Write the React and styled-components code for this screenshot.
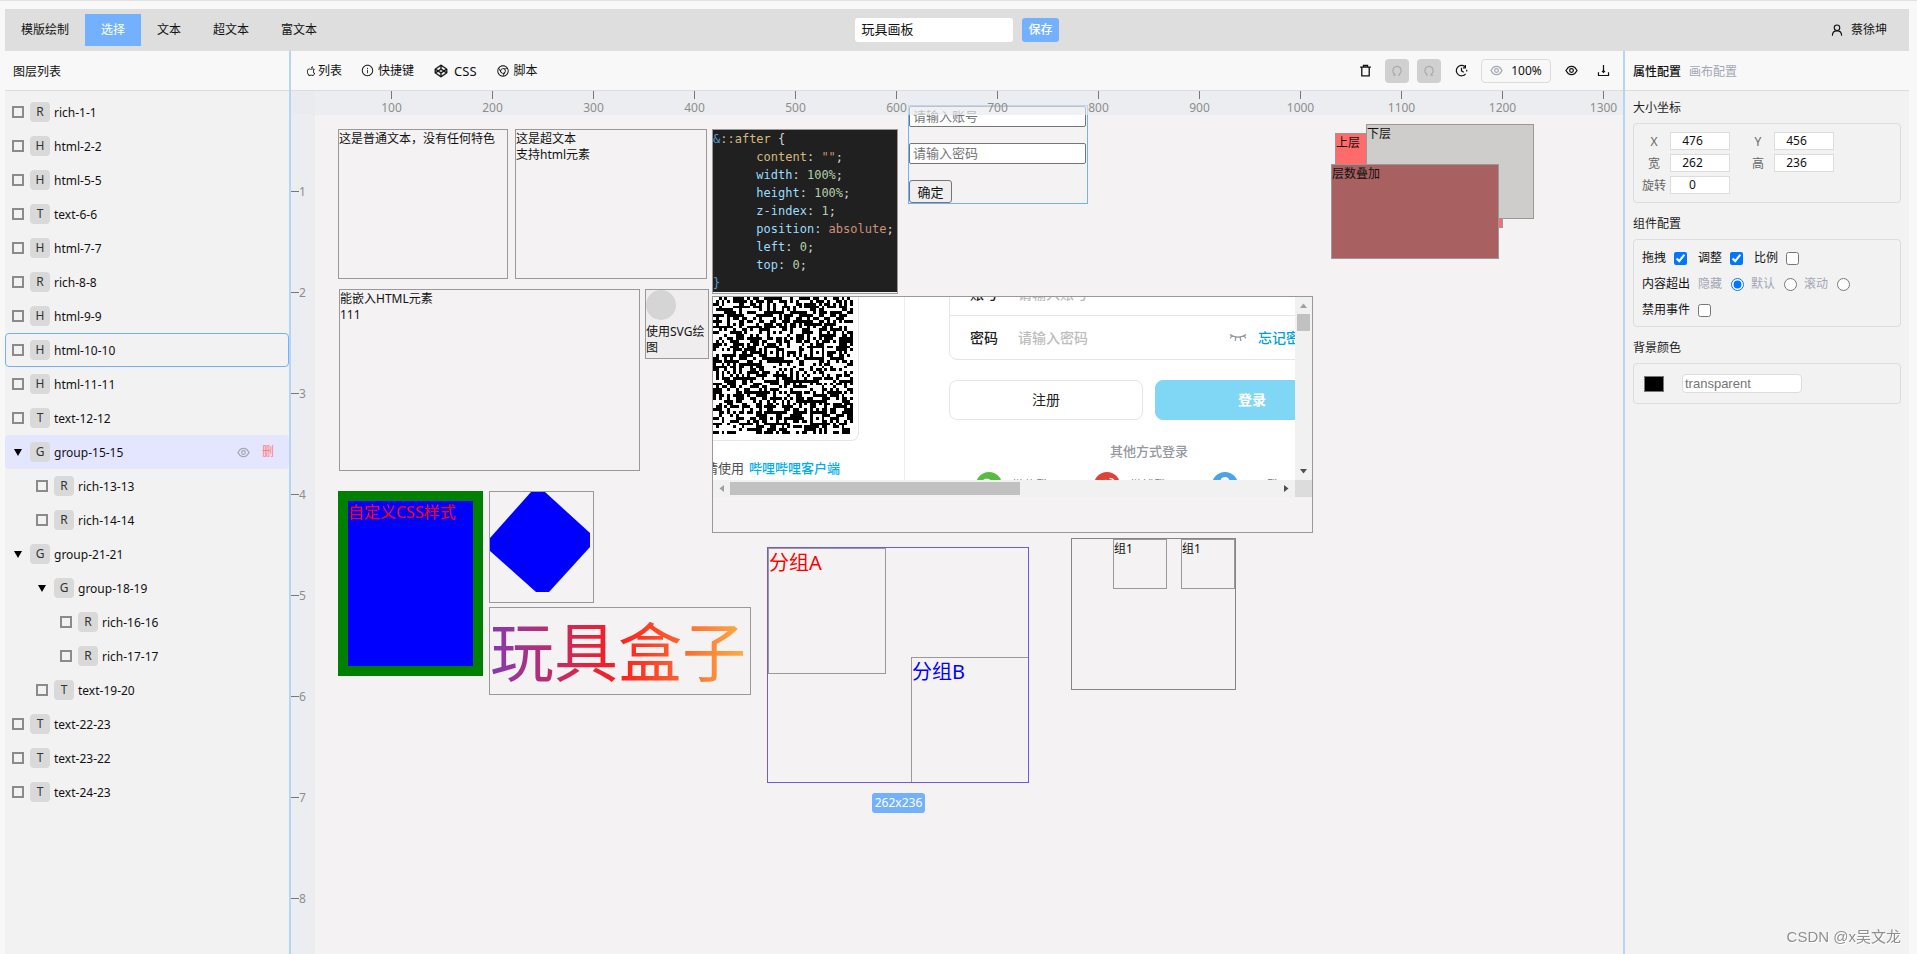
import React from "react";
import styled, { createGlobalStyle, css } from "styled-components";
import {
  AiOutlineApple,
  AiOutlineInfoCircle,
  AiOutlineCodepen,
  AiOutlineChrome,
} from "react-icons/ai";
import { FaWeixin, FaWeibo, FaQq } from "react-icons/fa";

const sans = `"Noto Sans", "Noto Sans CJK SC", sans-serif`;
const cjk = `"Noto Sans CJK SC", sans-serif`;

const GlobalStyle = createGlobalStyle`
  *, *::before, *::after { box-sizing: border-box; }
  body {
    margin: 0;
    background: #f8f8f8;
    color: #111;
    font: 12px/16px ${sans};
  }
  button, input { font: inherit; color: inherit; margin: 0; }
  button { padding: 0; border: 0; background: none; cursor: pointer; white-space: nowrap; }
  a { text-decoration: none; }
  svg { display: block; flex: none; }
`;

/* ---------- page frame ---------- */

const Page = styled.div`
  min-height: 100vh;
  display: flex;
  flex-direction: column;
  border-top: 1px solid #e2e2e2;
  padding: 8px 8px 0 5px;
`;

const Header = styled.header`
  height: 42px;
  display: grid;
  grid-template-columns: 1fr auto 1fr;
  align-items: center;
  background: #dedede;
`;

const Nav = styled.nav`
  display: flex;
`;

const NavButton = styled.button`
  height: 32px;
  padding: 0 16px;
  ${(p) => p.$active && css`background: #73b1ff; color: #fff;`}
`;

const TitleForm = styled.form`
  display: flex;
  gap: 9px;
`;

const TitleInput = styled.input`
  width: 158px;
  height: 24px;
  padding: 0 6px 4px;
  border: 0;
  border-radius: 3px;
  background: #fff;
  font-size: 13px;
`;

const SaveButton = styled.button`
  height: 24px;
  padding: 0 6px;
  border-radius: 3px;
  background: #73b1ff;
  color: #fff;
  font-weight: 500;
`;

const User = styled.div`
  display: flex;
  align-items: center;
  justify-content: flex-end;
  gap: 8px;
  padding-right: 22px;
`;

const Main = styled.main`
  flex: 1;
  display: flex;
`;

const SidePanel = styled.aside`
  flex: none;
  width: 284px;
  background: #f2f2f2;
`;

const Divider = styled.div`
  flex: none;
  width: 2px;
  background: #b5d4fb;
`;

const Center = styled.section`
  flex: 1;
  min-width: 0;
  display: flex;
  flex-direction: column;
`;

const PanelHeader = styled.div`
  height: 40px;
  display: flex;
  align-items: center;
  gap: 8px;
  padding: 2px 8px 0;
  border-bottom: 1px solid #dcdcdc;
  background: #f8f8f8;
`;

const PanelTab = styled.button`
  color: ${(p) => (p.$active ? "#111" : "#a3a6b4")};
  font-weight: ${(p) => (p.$active ? 500 : 400)};
`;

/* ---------- layer list ---------- */

const LayerList = styled.ul`
  margin: 0;
  padding: 4px 0;
  list-style: none;
`;

const LayerRow = styled.li`
  height: 34px;
  display: flex;
  align-items: center;
  padding: 0 14px 0 ${(p) => 6 + p.$depth * 24}px;
  border: 1px solid ${(p) => (p.$focused ? "#73b1ff" : "transparent")};
  border-radius: 4px;
  background: ${(p) => (p.$selected ? "#e4e6ff" : "transparent")};
`;

const LayerCheck = styled.input`
  appearance: none;
  width: 12px;
  height: 12px;
  border: 2px solid #8b8b8b;
  outline: 0;
`;

const Collapse = styled.button`
  width: 12px;
  height: 12px;
  display: grid;
  place-items: center;
`;

const LayerLabel = styled.label`
  flex: 1;
  display: flex;
  align-items: center;
  gap: 4px;
  margin-left: 6px;
  line-height: 20px;
`;

const LayerName = styled.span`
  padding-top: 2px;
`;

const TypeBadge = styled.span`
  width: 20px;
  height: 20px;
  border-radius: 4px;
  background: #d9d9d9;
  color: #333;
  line-height: 20px;
  text-align: center;
`;

const RowAction = styled.button`
  margin-left: 12px;
  color: ${(p) => (p.$danger ? "#ff7777" : "#a3a6b4")};
`;

/* ---------- toolbar ---------- */

const Toolbar = styled.div`
  height: 40px;
  display: flex;
  align-items: center;
  justify-content: space-between;
  padding: 0 8px 0 14px;
  border-bottom: 1px solid #dcdcdc;
  background: #f8f8f8;
`;

const ToolGroup = styled.div`
  display: flex;
  align-items: center;
  gap: ${(p) => p.$gap}px;
`;

const TextTool = styled.button`
  display: flex;
  align-items: center;
  gap: ${(p) => p.$gap || 4}px;
  font-size: ${(p) => (p.$latin ? 13 : 12)}px;
`;

const IconTool = styled.button`
  width: 24px;
  height: 24px;
  display: grid;
  place-items: center;
  border-radius: 4px;
  &:disabled { background: #d0d0d0; color: #a8a8a8; }
`;

const ZoomBox = styled.button`
  width: 70px;
  height: 24px;
  display: flex;
  align-items: center;
  justify-content: center;
  gap: 8px;
  border: 1px solid #dcdcdc;
  border-radius: 4px;
  svg { color: #a3a6b4; }
`;

/* ---------- canvas ---------- */

const Workspace = styled.div`
  position: relative;
  flex: 1;
  min-height: 740px;
  overflow: hidden;
  background: #f4f2f3;
`;

const Ruler = styled.div`
  position: absolute;
  top: 0;
  left: 0;
  display: flex;
  overflow: hidden;
  background: rgba(232, 234, 238, 0.65);
  color: #8d8d8d;
  line-height: 18px;
  ${(p) =>
    p.$vertical
      ? css`bottom: 0; width: 24px; flex-direction: column; padding-top: 50px;`
      : css`right: 0; height: 24px; padding-left: 50px;`}
`;

const RulerCell = styled.div`
  flex: none;
  display: flex;
  align-items: center;
  ${(p) => (p.$vertical ? css`height: 101px;` : css`width: 101px; flex-direction: column;`)}
`;

const Tick = styled.span`
  flex: none;
  background: #777;
  ${(p) => (p.$vertical ? css`width: 8px; height: 1px;` : css`width: 1px; height: 8px;`)}
`;

const Node = styled.div`
  position: absolute;
  left: ${(p) => p.$x}px;
  top: ${(p) => p.$y}px;
  width: ${(p) => p.$w}px;
  height: ${(p) => p.$h}px;
  overflow: hidden;
  border: 1px solid ${(p) => p.$line || "#999"};
  background: ${(p) => p.$fill || "transparent"};
  color: ${(p) => p.$color || "#111"};
`;

const TextNode = styled(Node)`
  padding-top: 1px;
`;

const StyledBox = styled(Node)`
  border: 10px solid green;
  background: blue;
  color: red;
  font-size: 16px;
  line-height: 22px;
`;

const GroupText = styled.div`
  font-size: 20px;
  line-height: 28px;
`;

const GradientText = styled.div`
  font-size: 64px;
  line-height: 80px;
  white-space: nowrap;
  font-family: ${cjk};
  width: 256px;
  background: linear-gradient(90deg, #833ab4, #fd1d1d 50%, #fcb045);
  background-clip: text;
  color: transparent;
`;

const Code = styled.pre`
  margin: 0;
  background: #202020;
  color: #d4d4d4;
  font: 12px/18px "DejaVu Sans Mono", monospace;
`;

const Tok = styled.span`
  color: ${(p) => ({ amp: "#569cd6", sel: "#d7ba7d", prop: "#9cdcfe", num: "#b5cea8", str: "#ce9178" }[p.$k])};
`;

const LoginForm = styled.form`
  display: flex;
  flex-direction: column;
  align-items: flex-start;
  gap: 16px;
`;

const LoginInput = styled.input`
  width: 177px;
  height: 21px;
  padding: 0 3px 2px;
  border: 1px solid #767676;
  border-radius: 2px;
  background: #fff;
  font-size: 13px;
  &::placeholder { color: #757575; }
`;

const LoginButton = styled.button`
  width: 43px;
  height: 23px;
  border: 1px solid #767676;
  border-radius: 3px;
  background: #efefef;
  font-size: 13px;
`;

const SizeTag = styled.div`
  position: absolute;
  left: ${(p) => p.$x}px;
  top: ${(p) => p.$y}px;
  width: 53px;
  border-radius: 3px;
  background: #73b1ff;
  color: #fff;
  line-height: 20px;
  text-align: center;
`;

/* ---------- embedded page ---------- */

const Frame = styled.div`
  display: grid;
  grid-template-columns: 1fr 17px;
  grid-template-rows: 183px 17px;
`;

const FrameView = styled.div`
  display: flex;
  overflow: hidden;
  background: #fff;
`;

const ScrollTrack = styled.div`
  display: flex;
  flex-direction: ${(p) => (p.$vertical ? "column" : "row")};
  align-items: center;
  justify-content: space-between;
  padding: ${(p) => (p.$vertical ? "6px 0" : "0 5px")};
  background: #f1f1f1;
  color: #505050;
`;

const ScrollThumb = styled.div`
  background: #c1c1c1;
  ${(p) =>
    p.$vertical
      ? css`width: 13px; height: 17px; margin: 6px 0 auto;`
      : css`height: 13px; width: 290px; margin: 0 auto 0 5px;`}
`;

const ScrollCorner = styled.div`
  background: #dcdcdc;
`;

const QrPane = styled.div`
  flex: none;
  width: 192px;
  border-right: 1px solid #eee;
`;

const QrCard = styled.div`
  width: 146px;
  height: 144px;
  border: 1px solid #e3e5e7;
  border-width: 0 1px 1px 0;
  border-bottom-right-radius: 8px;
`;

const QrHint = styled.p`
  margin: 17px 0 0 -8px;
  font-size: 13px;
  line-height: 20px;
  color: #505050;
  white-space: nowrap;
  a { margin-left: 5px; color: #00aeec; font-weight: 500; }
`;

const Portal = styled.form`
  flex: none;
  width: 400px;
  margin: -26px 0 0 44px;
  font-size: 14px;
  line-height: 20px;
`;

const Credentials = styled.div`
  border: 1px solid #e3e5e7;
  border-radius: 8px;
`;

const CredentialRow = styled.div`
  height: 43px;
  display: flex;
  align-items: center;
  padding-left: 20px;
  color: #212121;
  font-weight: 500;
  &:first-child { height: 44px; border-bottom: 1px solid #e3e5e7; }
  label { width: 48px; }
  input { width: 211px; padding: 0; border: 0; background: none; }
  input::placeholder { color: #bdbdbd; }
  a { margin-left: 11px; color: #00a1d6; white-space: nowrap; }
`;

const PortalButtons = styled.div`
  display: flex;
  gap: 12px;
  margin-top: 20px;
`;

const PortalButton = styled.button`
  flex: 1;
  height: 40px;
  border: 1px solid ${(p) => (p.$primary ? "#7fd6f5" : "#e3e5e7")};
  border-radius: 8px;
  background: ${(p) => (p.$primary ? "#7fd6f5" : "#fff")};
  color: ${(p) => (p.$primary ? "#fff" : "#212121")};
  font-weight: ${(p) => (p.$primary ? 700 : 400)};
`;

const OtherTitle = styled.div`
  margin-top: 21px;
  font-size: 13px;
  color: #9499a0;
  font-weight: 500;
  text-align: center;
`;

const Socials = styled.div`
  display: flex;
  margin: 11px 0 0 27px;
`;

const SocialLink = styled.a`
  flex: none;
  width: 118px;
  display: flex;
  align-items: center;
  gap: 10px;
  font-size: 12px;
  color: #707070;
`;

const SocialDot = styled.span`
  width: 26px;
  height: 26px;
  display: grid;
  place-items: center;
  border-radius: 50%;
  background: ${(p) => p.$fill};
  color: #fff;
`;

const SocialName = styled.span`
  padding-top: 2px;
`;

/* ---------- property panel ---------- */

const Properties = styled.div`
  display: flex;
  flex-direction: column;
  padding: 8px;
`;

const SectionTitle = styled.h2`
  margin: 0 0 6px;
  font: inherit;
  line-height: 18px;
  color: #222;
`;

const Box = styled.div`
  display: ${(p) => (p.$row ? "flex" : "block")};
  gap: 18px;
  padding: ${(p) => p.$pad};
  margin-bottom: 12px;
  border: 1px solid #dcdcdc;
  border-radius: 4px;
`;

const CoordGrid = styled.div`
  display: grid;
  grid-template-columns: 88px 88px;
  gap: 4px 16px;
`;

const Coord = styled.label`
  height: 18px;
  display: grid;
  grid-template-columns: 24px 60px;
  gap: 4px;
  color: #666;
  line-height: 20px;
  text-align: center;
  white-space: nowrap;
`;

const NumberInput = styled.input`
  width: 60px;
  height: 18px;
  padding: 0;
  border: 1px solid #dcdcdc;
  background: #fff;
  color: #111;
  text-align: center;
`;

const OptionRow = styled.div`
  height: 26px;
  display: flex;
  align-items: center;
`;

const Option = styled.label`
  display: flex;
  align-items: center;
  gap: ${(p) => (p.$radio ? 9 : 8)}px;
  margin-right: ${(p) => (p.$radio ? 7 : 11)}px;
  color: ${(p) => (p.$radio ? "#a3a6b4" : "#111")};
  input { width: 13px; height: 13px; }
`;

const RowLabel = styled.span`
  margin-right: 8px;
`;

const ColorInput = styled.input`
  appearance: none;
  width: 20px;
  height: 16px;
  margin-top: 2px;
  padding: 0;
  border: 0;
  background: none;
  &::-webkit-color-swatch-wrapper { padding: 0; }
  &::-webkit-color-swatch { border: 1px solid #777; border-radius: 0; }
`;

const ColorText = styled.input`
  width: 120px;
  height: 19px;
  padding: 0 2px;
  border: 1px solid #dcdcdc;
  border-radius: 4px;
  background: #fff;
  font: 13px "Liberation Sans", sans-serif;
  &::placeholder { color: #757575; }
`;

const Watermark = styled.div`
  position: fixed;
  right: 16px;
  bottom: 7px;
  color: #8f8f8f;
  font: 15px/20px "Liberation Sans", "Noto Sans CJK SC", sans-serif;
  text-shadow: 1px 1px 0 #fff;
`;

/* ---------- icons ---------- */

const Line = ({ size = 14, children }) => (
  <svg width={size} height={size} viewBox="0 0 14 14" fill="none" stroke="currentColor" strokeWidth="1.3" aria-hidden="true">
    {children}
  </svg>
);

const EyeIcon = () => (
  <Line size={13}>
    <path d="M1 7 L3.4 3.8 Q5 2.6 7 2.6 T10.6 3.8 L13 7 L10.6 10.2 Q9 11.4 7 11.4 T3.4 10.2 Z" />
    <circle cx="7" cy="7" r="2" />
  </Line>
);
const TrashIcon = () => (
  <Line size={13}>
    <path d="M1.2 3.4 H12.8 M4.8 3 V1.6 H9.2 V3 M3 3.6 V12.8 H11 V3.6" strokeWidth="1.4" />
  </Line>
);
const UndoIcon = () => (
  <Line size={12}>
    <path d="M2.2 12 H4.6 V10.8 A4.9 4.9 0 1 1 9.4 10.8 V12 H10.4" />
  </Line>
);
const RedoIcon = () => (
  <Line size={12}>
    <path d="M11.8 12 H9.4 V10.8 A4.9 4.9 0 1 0 4.6 10.8 V12 H3.6" />
  </Line>
);
const HistoryIcon = () => (
  <Line size={13}>
    <path d="M10.6 2.8 A5.6 5.6 0 1 0 11.4 10.6 M11.2 1 V4.2 H8.6 M7 4 V7.4 L9.4 8.8 M12.6 6.2 V8" />
  </Line>
);
const DownloadIcon = () => (
  <Line size={13}>
    <path d="M1.6 9 V12.4 H12.4 V9 M7 1.2 V9 M5.4 7.4 L7 9 L8.6 7.4" />
  </Line>
);
const UserIcon = () => (
  <Line size={12}>
    <circle cx="7" cy="4.4" r="3.2" />
    <path d="M1.6 13.6 C1.6 9.8 4 8 7 8 S12.4 9.8 12.4 13.6" />
  </Line>
);
const ClosedEyeIcon = () => (
  <svg width="18" height="10" viewBox="0 0 18 10" fill="none" stroke="#9499a0" strokeWidth="1.3" aria-hidden="true">
    <path d="M1 1.5 C5 5 13 5 17 1.5 M2.8 3 L1.2 5.4 M6.8 4.2 L6.2 8 M11.2 4.2 L11.8 8 M15.2 3 L16.8 5.4" />
  </svg>
);
const Arrow = ({ dir, faded }) => (
  <svg width="7" height="5" viewBox="0 0 7 5" opacity={faded ? 0.5 : 1} aria-hidden="true"
    transform={`rotate(${{ down: 0, up: 180, left: 90, right: 270 }[dir]})`}>
    <path d="M0 0 H7 L3.5 4.5 Z" fill="currentColor" />
  </svg>
);
const Caret = () => (
  <svg width="8" height="7" viewBox="0 0 8 7" aria-hidden="true">
    <path d="M0 0 H8 L4 7 Z" fill="#000" />
  </svg>
);

/* Deterministic module pattern with four alignment marks. */
const QR_COLS = 49;
const QR_ROWS = 48;
const QR_MARKS = [[20, 19], [36, 19], [20, 42], [36, 42]];
const qrPath = (() => {
  let seed = 20231;
  let d = "";
  for (let r = 0; r < QR_ROWS; r++) {
    for (let c = 0; c < QR_COLS; c++) {
      seed = (seed * 1103515245 + 12345) % 2147483648;
      let on = seed / 2147483648 < 0.52;
      for (const [mc, mr] of QR_MARKS) {
        const ring = Math.max(Math.abs(c - mc), Math.abs(r - mr));
        if (ring <= 2) on = ring !== 1;
      }
      if (on) d += `M${c} ${r}h1v1h-1z`;
    }
  }
  return d;
})();

const QrCode = () => (
  <svg width="140" height="137" viewBox={`0 0 ${QR_COLS} ${QR_ROWS}`} preserveAspectRatio="none" shapeRendering="crispEdges" role="img" aria-label="QR">
    <path d={qrPath} fill="#000" />
  </svg>
);

/* ---------- data ---------- */

const layers = [
  ["R", "rich-1-1"], ["H", "html-2-2"], ["H", "html-5-5"], ["T", "text-6-6"],
  ["H", "html-7-7"], ["R", "rich-8-8"], ["H", "html-9-9"], ["H", "html-10-10"],
  ["H", "html-11-11"], ["T", "text-12-12"], ["G", "group-15-15"],
  ["R", "rich-13-13", 1], ["R", "rich-14-14", 1], ["G", "group-21-21"],
  ["G", "group-18-19", 1], ["R", "rich-16-16", 2], ["R", "rich-17-17", 2],
  ["T", "text-19-20", 1], ["T", "text-22-23"], ["T", "text-23-22"], ["T", "text-24-23"],
];

const codeLines = [
  ["width", "100%", "num"], ["height", "100%", "num"], ["z-index", "1", "num"],
  ["position", "absolute", "str"], ["left", "0", "num"], ["top", "0", "num"],
];

const coords = [["X", 476], ["Y", 456], ["宽", 262], ["高", 236], ["旋转", 0]];
const socials = [
  ["#58bc42", FaWeixin, "微信登录"], ["#dd4438", FaWeibo, "微博登录"], ["#4ba3e8", FaQq, "QQ登录"],
];

const range = (n) => Array.from({ length: n }, (_, i) => i + 1);

/* ---------- parts ---------- */

function Layers() {
  return (
    <LayerList>
      {layers.map(([type, name, depth = 0]) => {
        const selected = name === "group-15-15";
        return (
          <LayerRow key={name} $depth={depth} $selected={selected} $focused={name === "html-10-10"}>
            {type === "G" ? (
              <Collapse id={name} aria-label={`折叠 ${name}`}><Caret /></Collapse>
            ) : (
              <LayerCheck type="checkbox" id={name} />
            )}
            <LayerLabel htmlFor={name}>
              <TypeBadge>{type}</TypeBadge>
              <LayerName>{name}</LayerName>
            </LayerLabel>
            {selected && (
              <>
                <RowAction aria-label="显示"><EyeIcon /></RowAction>
                <RowAction $danger>删</RowAction>
              </>
            )}
          </LayerRow>
        );
      })}
    </LayerList>
  );
}

function EmbeddedPage() {
  return (
    <Frame>
      <FrameView>
        <QrPane>
          <QrCard><QrCode /></QrCard>
          <QrHint>请使用<a href="#client">哔哩哔哩客户端</a></QrHint>
        </QrPane>
        <Portal>
          <Credentials>
            <CredentialRow>
              <label htmlFor="portal-user">账号</label>
              <input id="portal-user" placeholder="请输入账号" />
            </CredentialRow>
            <CredentialRow>
              <label htmlFor="portal-pass">密码</label>
              <input id="portal-pass" type="password" placeholder="请输入密码" />
              <ClosedEyeIcon />
              <a href="#forgot">忘记密码</a>
            </CredentialRow>
          </Credentials>
          <PortalButtons>
            <PortalButton type="button">注册</PortalButton>
            <PortalButton type="button" $primary>登录</PortalButton>
          </PortalButtons>
          <OtherTitle>其他方式登录</OtherTitle>
          <Socials>
            {socials.map(([fill, Icon, text]) => (
              <SocialLink key={text} href="#social">
                <SocialDot $fill={fill}><Icon size={16} /></SocialDot>
                <SocialName>{text}</SocialName>
              </SocialLink>
            ))}
          </Socials>
        </Portal>
      </FrameView>
      <ScrollTrack $vertical>
        <Arrow dir="up" faded />
        <ScrollThumb $vertical />
        <Arrow dir="down" />
      </ScrollTrack>
      <ScrollTrack>
        <Arrow dir="left" faded />
        <ScrollThumb />
        <Arrow dir="right" />
      </ScrollTrack>
      <ScrollCorner />
    </Frame>
  );
}

function Canvas() {
  return (
    <Workspace>
      <TextNode $x={47} $y={38} $w={170} $h={150}>这是普通文本，没有任何特色</TextNode>
      <TextNode $x={224} $y={38} $w={192} $h={150}>这是超文本<br />支持html元素</TextNode>
      <Node $x={421} $y={38} $w={186} $h={165}>
        <Code>
          <Tok $k="amp">&amp;</Tok><Tok $k="sel">::after</Tok>{" {\n"}
          {"      "}<Tok $k="sel">content</Tok>: <Tok $k="str">""</Tok>{";\n"}
          {codeLines.map(([prop, value, kind]) => (
            <React.Fragment key={prop}>
              {"      "}<Tok $k="prop">{prop}</Tok>: <Tok $k={kind}>{value}</Tok>{";\n"}
            </React.Fragment>
          ))}
          <Tok $k="amp">{"}"}</Tok>
        </Code>
      </Node>
      <Node $x={617} $y={14} $w={180} $h={99} $line="#73b1ff">
        <LoginForm>
          <LoginInput aria-label="账号" placeholder="请输入账号" />
          <LoginInput aria-label="密码" placeholder="请输入密码" />
          <LoginButton type="button">确定</LoginButton>
        </LoginForm>
      </Node>
      <TextNode $x={48} $y={198} $w={301} $h={182}>能嵌入HTML元素<br />111</TextNode>
      <Node $x={354} $y={198} $w={64} $h={70} $fill="#efedee">
        <svg width="30" height="34" viewBox="0 0 30 34" aria-hidden="true">
          <circle cx="15" cy="15" r="15" fill="#d5d5d5" />
        </svg>
        使用SVG绘图
      </Node>
      <Node $x={421} $y={205} $w={601} $h={237}><EmbeddedPage /></Node>

      <StyledBox $x={47} $y={400} $w={145} $h={185}>自定义CSS样式</StyledBox>
      <Node $x={198} $y={400} $w={105} $h={112}>
        <svg width="100" height="100" viewBox="0 0 100 100" aria-hidden="true">
          <polygon points="41,0 55,0 100,41 100,55 59,100 46,100 0,59 0,46" fill="blue" />
        </svg>
      </Node>
      <Node $x={198} $y={516} $w={262} $h={88}><GradientText>玩具盒子</GradientText></Node>

      <Node $x={476} $y={456} $w={262} $h={236} $line="#7059e8">
        <Node as="section" $x={0} $y={0} $w={118} $h={126} $color="red"><GroupText>分组A</GroupText></Node>
        <Node as="section" $x={143} $y={109} $w={118} $h={126} $color="blue"><GroupText>分组B</GroupText></Node>
      </Node>
      <SizeTag $x={581} $y={702}>262x236</SizeTag>

      <Node $x={780} $y={447} $w={165} $h={152} $line="#858585">
        <TextNode $x={41} $y={0} $w={54} $h={50}>组1</TextNode>
        <TextNode $x={109} $y={0} $w={54} $h={50}>组1</TextNode>
      </Node>

      <TextNode $x={1044} $y={42} $w={168} $h={95} $fill="#ff6b6b">上层</TextNode>
      <TextNode $x={1075} $y={33} $w={168} $h={95} $fill="#cfcdcc">下层</TextNode>
      <TextNode $x={1040} $y={73} $w={168} $h={95} $fill="#a86060">层数叠加</TextNode>

      <Ruler>
        {range(13).map((n) => (
          <RulerCell key={n}><Tick />{n * 100}</RulerCell>
        ))}
      </Ruler>
      <Ruler $vertical>
        {range(8).map((n) => (
          <RulerCell key={n} $vertical><Tick $vertical />{n}</RulerCell>
        ))}
      </Ruler>
    </Workspace>
  );
}

function PropertyPanel() {
  return (
    <Properties>
      <SectionTitle>大小坐标</SectionTitle>
      <Box $pad="8px">
        <CoordGrid>
          {coords.map(([name, value]) => (
            <Coord key={name}>
              {name}
              <NumberInput type="number" defaultValue={value} />
            </Coord>
          ))}
        </CoordGrid>
      </Box>
      <SectionTitle>组件配置</SectionTitle>
      <Box $pad="5px 8px 3px">
        <OptionRow>
          <Option>拖拽<input type="checkbox" defaultChecked /></Option>
          <Option>调整<input type="checkbox" defaultChecked /></Option>
          <Option>比例<input type="checkbox" /></Option>
        </OptionRow>
        <OptionRow>
          <RowLabel>内容超出</RowLabel>
          <Option $radio>隐藏<input type="radio" name="overflow" defaultChecked /></Option>
          <Option $radio>默认<input type="radio" name="overflow" /></Option>
          <Option $radio>滚动<input type="radio" name="overflow" /></Option>
        </OptionRow>
        <OptionRow>
          <Option>禁用事件<input type="checkbox" /></Option>
        </OptionRow>
      </Box>
      <SectionTitle>背景颜色</SectionTitle>
      <Box $row $pad="10px">
        <ColorInput type="color" defaultValue="#000000" aria-label="背景颜色" />
        <ColorText placeholder="transparent" aria-label="背景颜色值" />
      </Box>
    </Properties>
  );
}

export default function App() {
  return (
    <>
      <GlobalStyle />
      <Page>
        <Header>
          <Nav>
            <NavButton>模版绘制</NavButton>
            <NavButton $active>选择</NavButton>
            <NavButton>文本</NavButton>
            <NavButton>超文本</NavButton>
            <NavButton>富文本</NavButton>
          </Nav>
          <TitleForm>
            <TitleInput aria-label="画板名称" defaultValue="玩具画板" />
            <SaveButton type="button">保存</SaveButton>
          </TitleForm>
          <User><UserIcon />蔡徐坤</User>
        </Header>
        <Main>
          <SidePanel>
            <PanelHeader>图层列表</PanelHeader>
            <Layers />
          </SidePanel>
          <Divider />
          <Center>
            <Toolbar>
              <ToolGroup $gap={19}>
                <TextTool $gap={1}><AiOutlineApple size={12} />列表</TextTool>
                <TextTool><AiOutlineInfoCircle size={13} />快捷键</TextTool>
                <TextTool $latin $gap={5}><AiOutlineCodepen size={16} strokeWidth={20} />CSS</TextTool>
                <TextTool><AiOutlineChrome size={14} />脚本</TextTool>
              </ToolGroup>
              <ToolGroup $gap={8}>
                <IconTool aria-label="删除"><TrashIcon /></IconTool>
                <IconTool aria-label="撤销" disabled><UndoIcon /></IconTool>
                <IconTool aria-label="重做" disabled><RedoIcon /></IconTool>
                <IconTool aria-label="历史"><HistoryIcon /></IconTool>
                <ZoomBox><EyeIcon />100%</ZoomBox>
                <IconTool aria-label="预览"><EyeIcon /></IconTool>
                <IconTool aria-label="下载"><DownloadIcon /></IconTool>
              </ToolGroup>
            </Toolbar>
            <Canvas />
          </Center>
          <Divider />
          <SidePanel>
            <PanelHeader>
              <PanelTab $active>属性配置</PanelTab>
              <PanelTab>画布配置</PanelTab>
            </PanelHeader>
            <PropertyPanel />
          </SidePanel>
        </Main>
      </Page>
      <Watermark>CSDN @x吴文龙</Watermark>
    </>
  );
}
